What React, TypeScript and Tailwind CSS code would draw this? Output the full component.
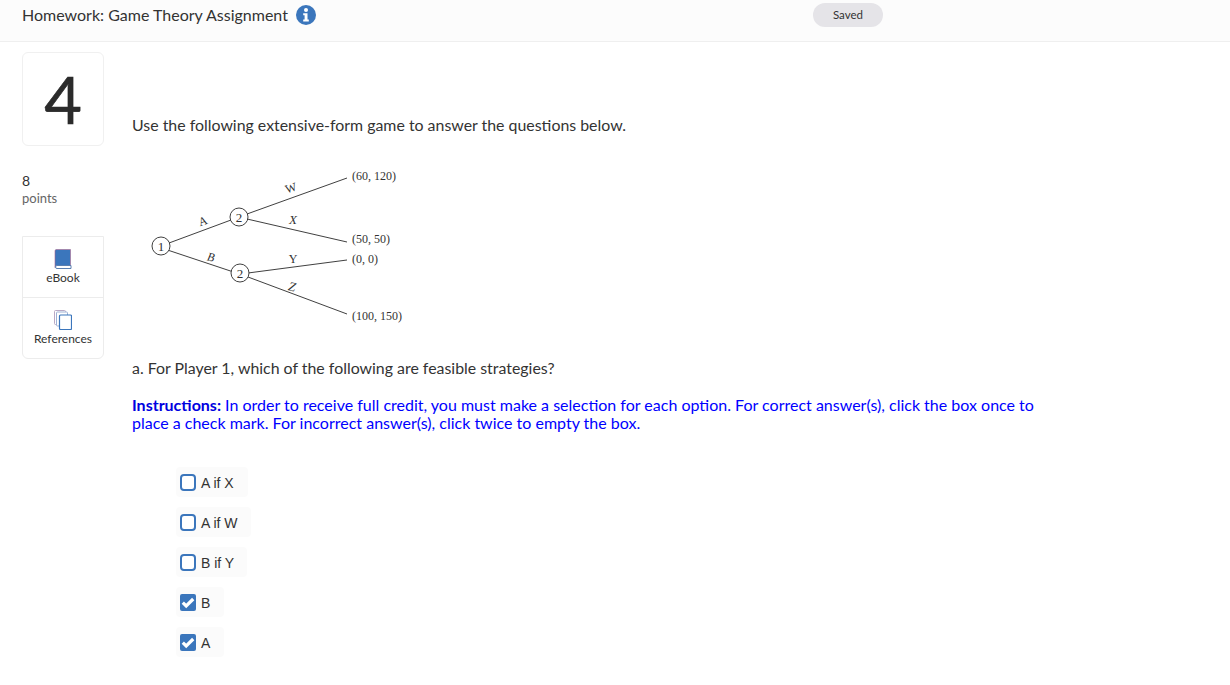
import React from "react";

const font = { fontFamily: "Lato, 'Liberation Sans', sans-serif" };

function Info() {
  return (
    <svg width="20" height="20" viewBox="0 0 20 20" className="ml-2 shrink-0">
      <circle cx="10" cy="10" r="10" fill="#3b76bc" />
      <circle cx="10" cy="5" r="2" fill="#fff" />
      <path d="M7.2 8.2h4.3v6.4h1.3v2H7.2v-2h1.4v-4.4H7.2z" fill="#fff" />
    </svg>
  );
}

function Book() {
  return (
    <svg width="18" height="20" viewBox="0 0 18 20" className="shrink-0">
      <path d="M2 .5h14.5v16H3a2 2 0 0 0-2 2V2A1.5 1.5 0 0 1 2 .5z" fill="#3b76bc" stroke="#a8668f" strokeWidth="0.6" />
      <path d="M3 16.5h14v3H3a1.5 1.5 0 0 1 0-3z" fill="#fff" stroke="#5a7fb0" strokeWidth="1" />
    </svg>
  );
}

function Copy() {
  return (
    <svg width="18" height="20" viewBox="0 0 18 20" fill="#fff" className="shrink-0">
      <rect x="0.5" y="0.5" width="11" height="14" rx="1" stroke="#b9a9c4" />
      <rect x="2.5" y="2" width="11" height="14" rx="1" stroke="#9fb2d4" />
      <rect x="5.5" y="5" width="12" height="14.5" rx="1" stroke="#3b76bc" strokeWidth="1.2" />
    </svg>
  );
}

function Tree() {
  const s = "#2a2a2a";
  const t = { fontFamily: "'Liberation Serif', serif", fill: "#333" };
  const lines = [
    [169, 243, 231, 220],
    [247, 214, 347, 178],
    [247, 219, 347, 242],
    [169, 250.5, 232, 271.5],
    [248, 273, 347, 260],
    [248, 277, 347, 314],
  ];
  return (
    <svg width="290" height="170" viewBox="132 160 290 170" className="block">
      {lines.map((l, i) => (
        <line key={i} x1={l[0]} y1={l[1]} x2={l[2]} y2={l[3]} stroke={s} strokeWidth="0.9" />
      ))}
      {[[161, 246, "1"], [239, 217, "2"], [240, 273, "2"]].map(([x, y, n]) => (
        <g key={String(x)}>
          <circle cx={x as number} cy={y as number} r="9" fill="#fff" stroke={s} strokeWidth="0.9" />
          <text x={x as number} y={(y as number) + 4.5} fontSize="13" textAnchor="middle" style={t}>{n}</text>
        </g>
      ))}
      <text x="203" y="225" fontSize="12" textAnchor="middle" style={t} transform="rotate(-18 203 221)">A</text>
      <text x="211" y="261" fontSize="12" textAnchor="middle" fontStyle="italic" style={t} transform="rotate(12 211 257)">B</text>
      <text x="291" y="192" fontSize="12" textAnchor="middle" style={t} transform="rotate(-18 291 188)">W</text>
      <text x="293" y="224" fontSize="13" textAnchor="middle" fontStyle="italic" style={t}>X</text>
      <text x="293" y="263" fontSize="12" textAnchor="middle" style={t}>Y</text>
      <text x="292" y="291" fontSize="13" textAnchor="middle" fontStyle="italic" style={t} transform="rotate(14 292 287)">Z</text>
      <text x="352" y="180" fontSize="12" style={t}>(60, 120)</text>
      <text x="352" y="243" fontSize="12" style={t}>(50, 50)</text>
      <text x="352" y="263" fontSize="12" style={t}>(0, 0)</text>
      <text x="352" y="320" fontSize="12" style={t}>(100, 150)</text>
    </svg>
  );
}

function Option({ label, width, checked }: { label: string; width: string; checked?: boolean }) {
  return (
    <div className={`flex h-[30px] items-center rounded bg-[#fbfbfb] pl-1 ${width}`}>
      {checked ? (
        <svg width="16" height="17" viewBox="0 0 16 17" className="shrink-0">
          <rect width="16" height="17" rx="2" fill="#3b76bc" />
          <path d="M2.8 8.6l3.4 3.4 7-7" fill="none" stroke="#fff" strokeWidth="3.2" />
        </svg>
      ) : (
        <div className="h-[17px] w-4 shrink-0 rounded-sm border-2 border-[#3b76bc] bg-white" />
      )}
      <span className="ml-[5px] pt-[2px] text-[14px] leading-4 text-[#333]" style={{ fontFamily: "'Liberation Sans', sans-serif" }}>{label}</span>
    </div>
  );
}

export default function App() {
  return (
    <div className="min-h-[685px] bg-white text-[#333]" style={font}>
      <header className="flex h-[42px] items-center border-b border-[#efefef] bg-[#fcfcfc] pb-3 pl-[22px]">
        <h1 className="text-[16px] leading-none font-normal text-[#333]">Homework: Game Theory Assignment</h1>
        <Info />
        <div className="ml-[497px] flex h-6 w-[70px] items-center justify-center rounded-full bg-[#e5e4e8] text-[11.5px] text-[#333]">Saved</div>
      </header>
      <div className="flex pl-[22px]">
        <aside className="w-[82px] shrink-0 pt-[10px]">
          <div className="flex h-[94px] items-center justify-center rounded-md border border-[#f0f0f0] text-[65px] leading-none text-[#2b2b2b] [-webkit-text-stroke:0.6px_#2b2b2b]">4</div>
          <div className="mt-[27px] text-[14px] leading-4 text-[#333]">8</div>
          <div className="mt-[1px] text-[13px] leading-4 text-[#666]">points</div>
          <div className="mt-[30px] overflow-hidden rounded-b-md border border-[#ececec]">
            <div className="flex h-[61px] flex-col items-center border-b border-[#ececec] pt-3">
              <Book />
              <span className="mt-px text-[12px] leading-4 text-[#333]">eBook</span>
            </div>
            <div className="flex h-[60px] flex-col items-center pt-3">
              <Copy />
              <span className="mt-px text-[12px] leading-4 text-[#333]">References</span>
            </div>
          </div>
        </aside>
        <main className="ml-7 flex-1 pt-[74px]">
          <p className="text-[15.9px] leading-[18px]">Use the following extensive-form game to answer the questions below.</p>
          <div className="mt-[26px]"><Tree /></div>
          <p className="mt-[29px] text-[15.9px] leading-[18px]">a. For Player 1, which of the following are feasible strategies?</p>
          <p className="mt-[19px] w-[920px] text-[16px] leading-[18px] text-[#0000ff]">
            <strong className="font-bold text-[#0000e0]">Instructions:</strong> In order to receive full credit, you must make a selection for each option. For correct answer(s), click the box once to place a check mark. For incorrect answer(s), click twice to empty the box.
          </p>
          <div className="mt-[35px] ml-11 flex flex-col gap-[10px]">
            <Option label="A if X" width="w-[72px]" />
            <Option label="A if W" width="w-[75px]" />
            <Option label="B if Y" width="w-[71px]" />
            <Option label="B" width="w-12" checked />
            <Option label="A" width="w-12" checked />
          </div>
        </main>
      </div>
    </div>
  );
}
